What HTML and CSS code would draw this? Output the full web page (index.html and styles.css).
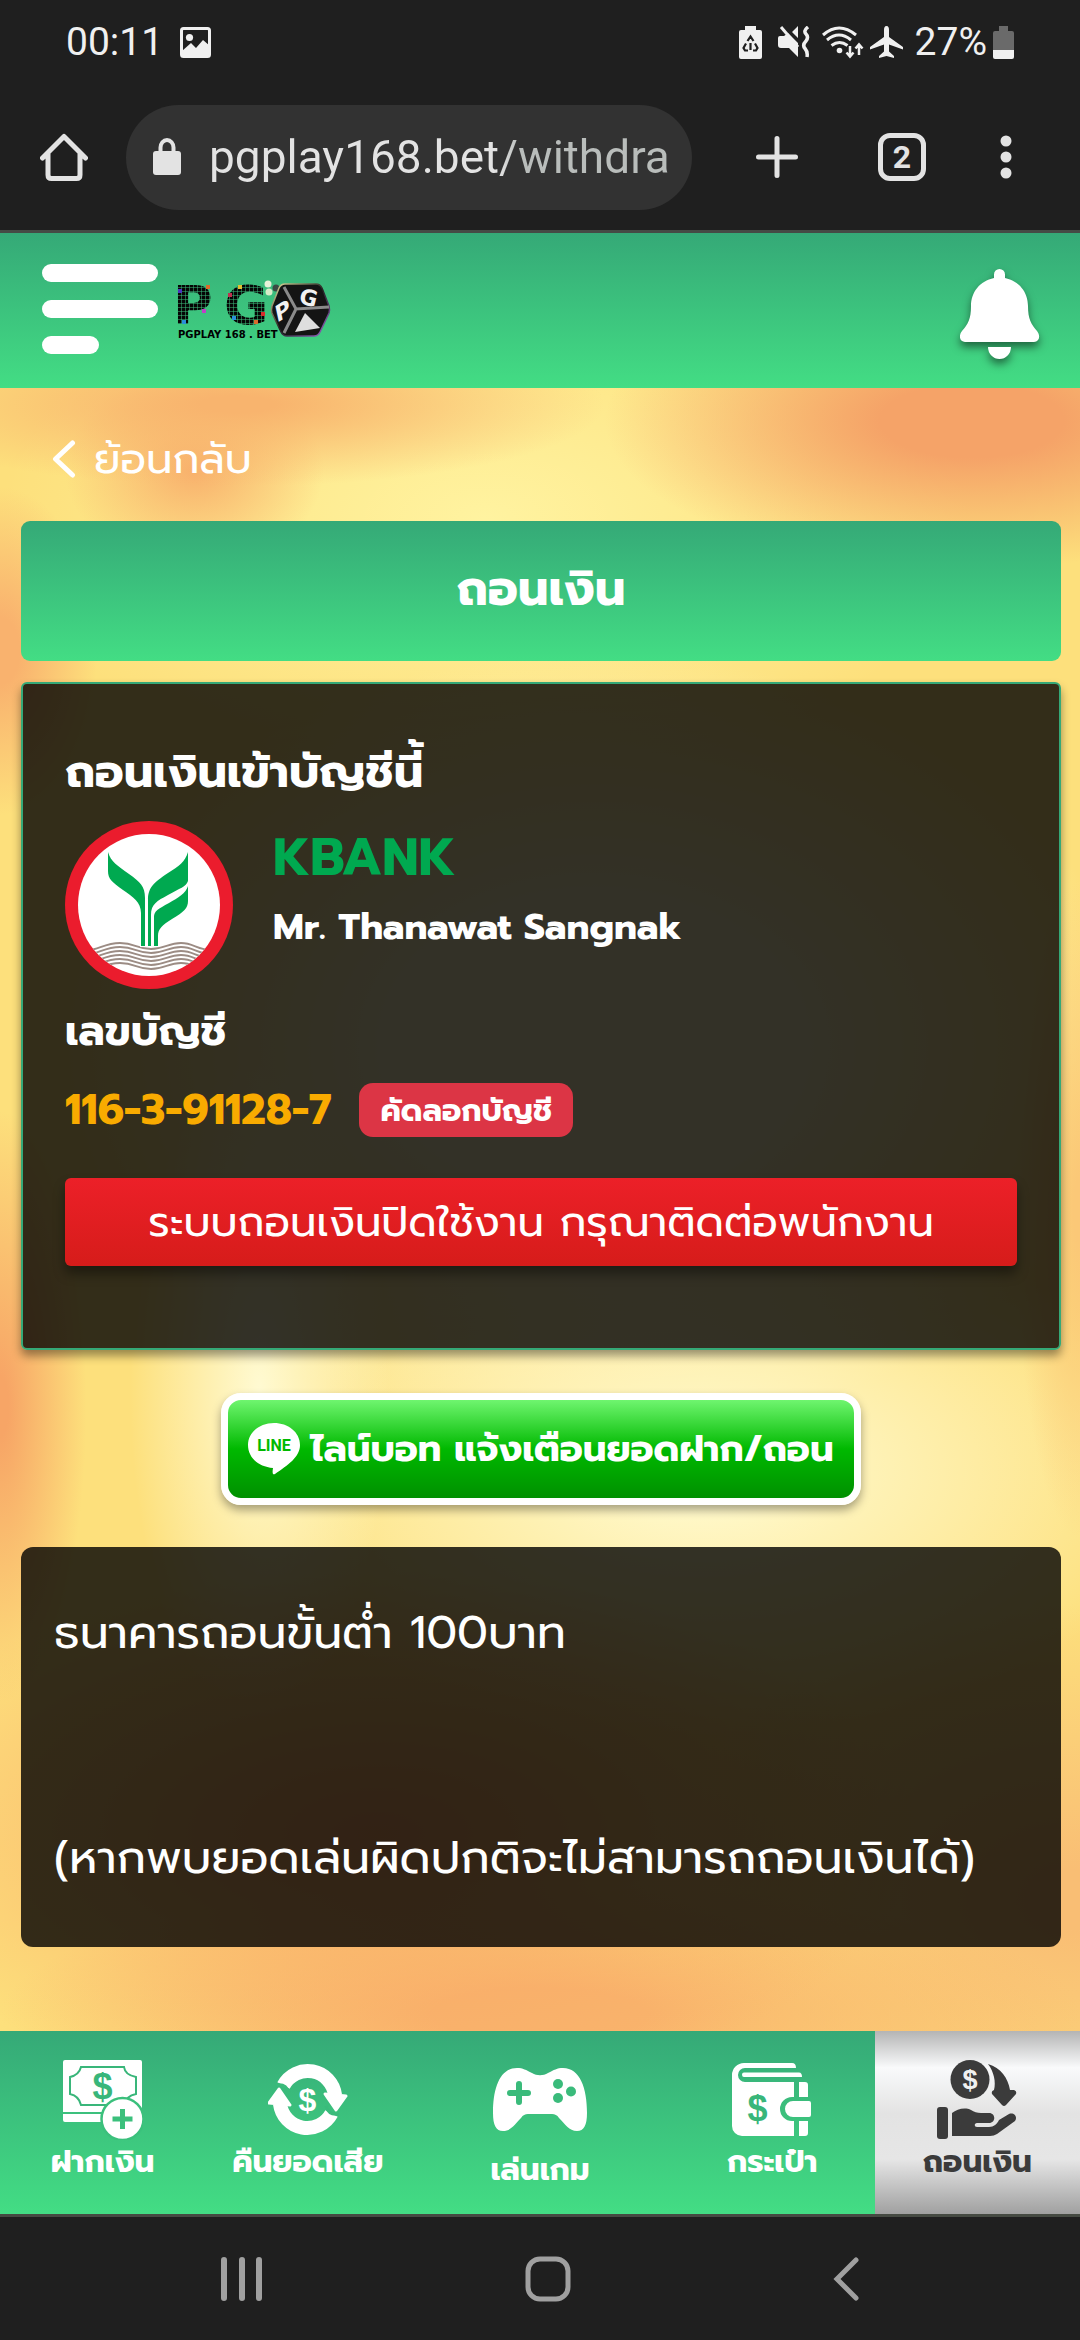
FILE: index.html
```html
<!DOCTYPE html>
<html lang="th">
<head>
    <meta charset="UTF-8">
    <meta name="viewport" content="width=device-width, initial-scale=1.0">
    <title>ถอนเงิน</title>
    <link rel="stylesheet" href="styles.css">
</head>
<body>
    <!-- Status bar -->
    <div class="status-bar">
        <div class="status-left">
            <span>00:11</span>
            <svg width="31" height="31" viewBox="0 0 31 31">
                <rect x="1.5" y="1.5" width="28" height="28" rx="2" fill="none" stroke="#f0f0f0" stroke-width="3"/>
                <circle cx="9.5" cy="10.5" r="3.6" fill="#f0f0f0"/>
                <path d="M2 24L11 16l5 5 7-8 7 6v10H2z" fill="#f0f0f0"/>
            </svg>
        </div>
        <div class="status-right">
            <svg width="23" height="33" viewBox="0 0 23 33">
                <path d="M6 0h11v4h4q2 0 2 2v25q0 2-2 2H2q-2 0-2-2V6q0-2 2-2h4z" fill="#f0f0f0"/>
                <path d="M8.500 15l3-4.500 3 4.500M16 17.500l2.500 4.500-1.500 2.500h-3M9 24.500H6L4.500 22 7 17.500M11.500 17v7" fill="none" stroke="#1f1f1f" stroke-width="2.200"/>
            </svg>
            <svg class="gap-sound" width="32" height="32" viewBox="0 0 32 32">
                <path d="M0 12q0-2 2-2h4l4-3 10 10v14l-9-9H3q-3 0-3-3zM20 0v12l-6-6z" fill="#f0f0f0"/>
                <path d="M3 1l17 20" stroke="#f0f0f0" stroke-width="3"/>
                <path d="M30 1q-5 4-2 7t0 7q-4 4-1 7.500t2 8.500" fill="none" stroke="#f0f0f0" stroke-width="3.500"/>
            </svg>
            <svg class="gap-wifi" width="42" height="33" viewBox="0 0 42 33">
                <g fill="none" stroke="#f0f0f0" stroke-width="3">
                    <path d="M1 9Q17-5 34 9M5 14q12-10 24 0M9.500 19.500q8-6 16 0"/>
                    <path d="M28 20v10M24.500 26.500l3.500 4 3.500-4M37 29V19M33.500 22.500l3.500-4 3.500 4" stroke-width="2.500"/>
                </g>
                <circle cx="17.500" cy="24.500" r="2.800" fill="#f0f0f0"/>
            </svg>
            <svg width="33" height="33" viewBox="0 0 33 33">
                <path d="M16.500 0c2 0 2.500 2 2.500 4v7l14 10v2.500L19 18.500v7l5 4.500v2l-7.500-2L9 32v-2l5-4.500v-7L0 23.500V21l14-10V4c0-2 .5-4 2.500-4z" fill="#f0f0f0"/>
            </svg>
            <span class="percent">27%</span>
            <svg width="21" height="33" viewBox="0 0 21 33">
                <path d="M6 0h9v5h4q2 0 2 2v17H0V7q0-2 2-2h4z" fill="#6a6a6a"/>
                <path d="M0 24h21v7q0 2-2 2H2q-2 0-2-2z" fill="#f0f0f0"/>
            </svg>
        </div>
    </div>

    <!-- Browser toolbar -->
    <div class="toolbar">
        <button class="tool-btn" aria-label="Home">
            <svg width="48" height="48" viewBox="0 0 48 48">
                <path d="M2.500 25L24 3.500 45.500 25M8 20v22q0 3.500 3.500 3.500h25q3.500 0 3.500-3.500V20" fill="none" stroke="#e3e3e3" stroke-width="5" stroke-linecap="round" stroke-linejoin="round"/>
            </svg>
        </button>
        <div class="address">
            <svg width="28" height="38" viewBox="0 0 28 38">
                <path d="M7.500 14V9.500a6.500 7.500 0 0 1 13 0V14" fill="none" stroke="#e3e3e3" stroke-width="4"/>
                <rect y="13" width="28" height="24" rx="3" fill="#e3e3e3"/>
            </svg>
            <input class="url" type="text" aria-label="URL" value="pgplay168.bet/withdra">
        </div>
        <div class="tool-group">
            <button class="tool-btn" aria-label="New tab">
                <svg width="42" height="42" viewBox="0 0 42 42">
                    <path d="M21 2.500v37M2.500 21h37" stroke="#e3e3e3" stroke-width="5" stroke-linecap="round"/>
                </svg>
            </button>
            <button class="tab-count">2</button>
            <button class="tool-btn" aria-label="Menu">
                <svg width="12" height="44" viewBox="0 0 12 44">
                    <circle cx="6" cy="6" r="5.500" fill="#e3e3e3"/>
                    <circle cx="6" cy="22" r="5.500" fill="#e3e3e3"/>
                    <circle cx="6" cy="38" r="5.500" fill="#e3e3e3"/>
                </svg>
            </button>
        </div>
    </div>

    <!-- Site header -->
    <header class="site-header">
        <button class="menu-btn" aria-label="เมนู">
            <span class="bar"></span>
            <span class="bar"></span>
            <span class="bar short"></span>
        </button>
        <a href="#" class="logo" aria-label="PGPLAY168.BET">
            <svg width="162" height="70" viewBox="-6 -6 162 70">
                <defs>
                    <pattern id="pixels" width="4" height="4" patternUnits="userSpaceOnUse">
                        <rect width="3.500" height="3.500" fill="#050505"/>
                    </pattern>
                    <linearGradient id="edge" x1="0" y1="0" x2="1" y2="1">
                        <stop offset="0" stop-color="#e8e2a0"/>
                        <stop offset=".5" stop-color="#222"/>
                        <stop offset="1" stop-color="#a060d0"/>
                    </linearGradient>
                </defs>
                <text class="logo-letters" x="-5 46" y="44" fill="url(#pixels)">PG</text>
                <rect x="28" y="5" width="4" height="4" fill="#d96a2c"/>
                <rect x="0" y="9" width="4" height="4" fill="#4a35c0"/>
                <rect x="24" y="29" width="4" height="4" fill="#c040c8"/>
                <rect x="4" y="40" width="4" height="4" fill="#2a8fd8"/>
                <rect x="60" y="5" width="4" height="4" fill="#e0c030"/>
                <rect x="50" y="13" width="4" height="4" fill="#c03050"/>
                <rect x="54" y="36" width="4" height="4" fill="#2a8fd8"/>
                <rect x="83" y="32" width="4" height="4" fill="#d82c2c"/>
                <rect x="76" y="40" width="4" height="4" fill="#d96a2c"/>
                <text class="logo-name" x="0" y="58">PGPLAY 168 . BET</text>
                <circle cx="90" cy="4" r="3.500" fill="#e6f2d8"/>
                <circle cx="98" cy="8" r="3.500" fill="#3b4a44"/>
                <circle cx="91" cy="12" r="3.500" fill="#d8ecc8"/>
                <path d="M107 4h31q4 0 6 4l7 18q1 4 0 7l-9 19q-2 4-6 4h-27q-4 0-6-4l-9-19q-1-3 0-7l7-18q2-4 6-4z" fill="#141414" stroke="url(#edge)" stroke-width="1.500"/>
                <path d="M106 7l12 22 33-2M118 29l-12 24" fill="none" stroke="#8a8a8a" stroke-width="3"/>
                <path d="M127 33l15 15-25 4z" fill="#dedede"/>
                <text class="dice-letter" transform="translate(120 23) rotate(14)">G</text>
                <text class="dice-letter" transform="translate(99 43) rotate(-12) skewY(-20)">P</text>
            </svg>
        </a>
        <button class="bell-btn" aria-label="แจ้งเตือน">
            <svg width="80" height="91" viewBox="0 0 80 91">
                <path d="M34 9V5.500a5.500 5.500 0 0 1 11 0V9C59 12 68 23 68 37c0 13 3 18 9 25 4 5 2 11-3 11H5c-5 0-7-6-3-11 6-7 9-12 9-25C11 23 20 12 34 9zM28 78h23a11.500 12 0 0 1-23 0z" fill="#fff"/>
            </svg>
        </button>
    </header>

    <main class="content">
        <a href="#" class="back">
            <svg width="24" height="38" viewBox="0 0 24 38">
                <path d="M20.500 3L3.500 19l17 16" fill="none" stroke="#fff" stroke-width="5" stroke-linecap="round" stroke-linejoin="round"/>
            </svg>
            <span>ย้อนกลับ</span>
        </a>

        <h1 class="title">ถอนเงิน</h1>

        <!-- Bank account -->
        <section class="account">
            <h2>ถอนเงินเข้าบัญชีนี้</h2>
            <div class="bank">
                <svg width="168" height="168" viewBox="0 0 168 168">
                    <defs>
                        <clipPath id="inner"><circle cx="84" cy="84" r="71"/></clipPath>
                    </defs>
                    <circle cx="84" cy="84" r="84" fill="#eb1c2d"/>
                    <circle cx="84" cy="84" r="71" fill="#fff"/>
                    <g clip-path="url(#inner)" fill="none" stroke="#9c8c84" stroke-width="1.800">
                        <path id="wave" d="M8 121C16 121 15 129 24 129S40 122 55 122S72 128 86 128S103 122 116 122S132 129 147 129"/>
                        <use href="#wave" y="4"/>
                        <use href="#wave" y="8"/>
                        <use href="#wave" y="12"/>
                        <use href="#wave" y="16"/>
                        <use href="#wave" y="20"/>
                    </g>
                    <path d="M75 118h19v8H75z" fill="#fff"/>
                    <g fill="#00a950">
                        <path d="M43 31C46 41 52 44 64 53 75 61 80 65 80 77v48h-4V92c0-11-8-16-18-23C47 61 43 58 43 50z"/>
                        <path d="M123 31C120 41 114 45 103 52 88 62 83 67 83 79v46h3V94c0-11 6-14 17-20 12-7 18-8 20-14z"/>
                        <path d="M123 65c-2 7-10 12-19 17-11 6-15 8-15 14v29h4v-10c0-7 4-11 14-17 12-7 16-11 16-18z"/>
                    </g>
                </svg>
                <div class="bank-info">
                    <p class="bank-name">KBANK</p>
                    <p class="owner">Mr. Thanawat Sangnak</p>
                </div>
            </div>
            <h3>เลขบัญชี</h3>
            <div class="number-row">
                <span class="number">116-3-91128-7</span>
                <button class="copy-btn">คัดลอกบัญชี</button>
            </div>
            <button class="closed-btn">ระบบถอนเงินปิดใช้งาน กรุณาติดต่อพนักงาน</button>
        </section>

        <a href="#" class="line-btn">
            <svg width="52" height="52" viewBox="0 0 52 52">
                <path d="M26 0c14 0 26 9 26 22 0 12-12 20-25 29-2 1-3 0-2-6C11 44 0 35 0 22 0 9 12 0 26 0z" fill="#fff"/>
                <text class="line-word" x="26" y="28" text-anchor="middle">LINE</text>
            </svg>
            <span>ไลน์บอท แจ้งเตือนยอดฝาก/ถอน</span>
        </a>

        <section class="notes">
            <p>ธนาคารถอนขั้นต่ำ 100บาท</p>
            <p>(หากพบยอดเล่นผิดปกติจะไม่สามารถถอนเงินได้)</p>
        </section>
    </main>

    <!-- Bottom menu -->
    <nav class="bottom-menu">
        <a href="#">
            <svg width="80" height="80" viewBox="0 0 80 80">
                <path d="M2 0h75q2 0 2 2v50H0V2q0-2 2-2zM0 54h60v8H2q-2 0-2-2z" fill="#fff"/>
                <path d="M18 7h43q1 8 12 10v17q-10 2-12 11H18Q16 36 7 34V17q9-2 11-10z" fill="none" stroke="#39b67a" stroke-width="2"/>
                <text class="dollar green big" x="39.500" y="39" text-anchor="middle">$</text>
                <circle cx="59.500" cy="59" r="21" fill="#fff" stroke="#3bc07c" stroke-width="2.500"/>
                <path d="M59.500 49v20M49.500 59h20" stroke="#3bc07c" stroke-width="5"/>
            </svg>
            <span>ฝากเงิน</span>
        </a>
        <a href="#">
            <svg width="80" height="80" viewBox="0 -5 80 80">
                <g id="turn">
                    <path d="M15.500 20.500A27.500 27.500 0 0 1 67 30" fill="none" stroke="#fff" stroke-width="14"/>
                    <path d="M57 29l21 2-10 14z" fill="#fff" stroke="#fff" stroke-width="3" stroke-linejoin="round"/>
                    <path d="M8 20q10-2 13 8" fill="none" stroke="#3abb7b" stroke-width="3"/>
                </g>
                <use href="#turn" transform="rotate(180 39.500 34.500)"/>
                <text class="dollar white" x="39.500" y="46" text-anchor="middle">$</text>
            </svg>
            <span>คืนยอดเสีย</span>
        </a>
        <a href="#" class="play">
            <svg width="94" height="80" viewBox="0 -8 94 80">
                <path d="M24 0c6 0 9 2 15 5 5 3 11 3 16 0C61 2 64 0 70 0c17 0 24 20 24 45 0 12-3 18-10 18-8 0-12-7-18-13-2-3-4-4-7-4H35c-3 0-5 1-7 4-6 6-10 13-18 13C3 63 0 57 0 45 0 20 7 0 24 0z" fill="#fff"/>
                <path d="M26 16v18M17 25h18" stroke="#3abb7b" stroke-width="6" stroke-linecap="round"/>
                <g fill="#3abb7b">
                    <circle cx="65" cy="16" r="5"/>
                    <circle cx="65" cy="30" r="5"/>
                    <circle cx="78" cy="23.500" r="5"/>
                </g>
            </svg>
            <span>เล่นเกม</span>
        </a>
        <a href="#">
            <svg width="80" height="80" viewBox="0 -3 80 80">
                <g fill="#fff">
                    <path d="M12 0h48q4 0 4 5H13a7 7 0 0 0 0 14h49v15h-2a12 12 0 0 0 0 24h2v15H10A10 10 0 0 1 0 63V12A12 12 0 0 1 12 0z"/>
                    <path d="M12 9.500h55q3 0 3 4.500H12q-2 0-2-2.200t2-2.300zM67 19h6q3 0 3 3v12h-9zM67 58h9v12q0 3-3 3h-6zM61 38h16q2 0 2 2v12q0 2-2 2H61a8 8 0 0 1 0-16z"/>
                </g>
                <text class="dollar green big" x="25.500" y="58" text-anchor="middle">$</text>
            </svg>
            <span>กระเป๋า</span>
        </a>
        <a href="#" class="active">
            <svg width="80" height="80" viewBox="0 0 80 80">
                <g fill="#3b3b3b">
                    <circle cx="33" cy="19.500" r="19.500"/>
                    <path d="M51 4c13 4 20 14 22 26h4q3 1 2 4L69 45q-2 2-4 0L55 34q-1-3 2-4c2-8 0-18-6-26z"/>
                    <rect y="47" width="11" height="32" rx="3"/>
                    <path d="M15 53c5-4 13-6 19-3 3 2 6 3 10 3h8c7 0 7 10 0 10H40c-3 0-3 4 0 4h12c5 0 8-3 10-7l10-6c5-2 9 3 6 7L60 74q-3 2-7 2H15z"/>
                </g>
                <text class="dollar light" x="33" y="29" text-anchor="middle">$</text>
            </svg>
            <span>ถอนเงิน</span>
        </a>
    </nav>

    <!-- System navigation -->
    <div class="system-nav">
        <button aria-label="Recent apps">
            <svg width="42" height="44" viewBox="0 0 42 44">
                <path d="M3 3v38M21 3v38M38 3v38" stroke="#a0a0a0" stroke-width="6" stroke-linecap="round"/>
            </svg>
        </button>
        <button aria-label="Home screen">
            <svg width="46" height="46" viewBox="0 0 46 46">
                <rect x="3" y="3" width="40" height="40" rx="12" fill="none" stroke="#a0a0a0" stroke-width="5"/>
            </svg>
        </button>
        <button aria-label="Back">
            <svg width="26" height="44" viewBox="0 0 26 44">
                <path d="M23 3L4 22l19 19" fill="none" stroke="#a0a0a0" stroke-width="5" stroke-linecap="round"/>
            </svg>
        </button>
    </div>
</body>
</html>
```
FILE: styles.css
```css
* {
    box-sizing: border-box;
}

body {
    margin: 0;
    min-height: 100vh;
    display: flex;
    flex-direction: column;
    font-family: "Prompt", Inter, "Noto Sans Thai", "Noto Sans", sans-serif;
    background-color: #1f1f1f;
    color: #fff;
}

h1, h2, h3, p {
    margin: 0;
}

button {
    padding: 0;
    border: none;
    background: none;
    color: inherit;
    font-family: inherit;
    cursor: pointer;
}

a {
    color: inherit;
    text-decoration: none;
}

svg {
    display: block;
    flex-shrink: 0;
}

/* Status bar */
.status-bar {
    display: flex;
    justify-content: space-between;
    align-items: center;
    height: 84px;
    padding: 0 66px;
    font-family: Roboto, sans-serif;
    font-size: 39px;
    color: #f0f0f0;
}

.status-left {
    display: flex;
    align-items: center;
    gap: 17px;
}

.status-right {
    display: flex;
    align-items: center;
    gap: 6px;
}

.status-right .gap-sound {
    margin: 0 6px 0 10px;
}

.percent {
    margin-left: 6px;
}

/* Browser toolbar */
.toolbar {
    display: flex;
    align-items: center;
    height: 149px;
    padding: 0 68px 0 40px;
    border-bottom: 3px solid #454a45;
    font-family: Roboto, sans-serif;
}

.address {
    flex: 1;
    min-width: 0;
    display: flex;
    align-items: center;
    gap: 28px;
    height: 105px;
    margin: 0 64px 0 38px;
    padding: 0 20px 0 27px;
    border-radius: 53px;
    background-color: #323232;
}

.url {
    flex: 1;
    min-width: 0;
    padding: 0;
    border: none;
    outline: none;
    font-family: inherit;
    font-size: 46px;
    color: transparent;
    background: linear-gradient(to right, #e3e3e3 290px, #b9bdbb 310px);
    background-clip: text;
    -webkit-background-clip: text;
}

.tool-group {
    display: flex;
    flex-shrink: 0;
    align-items: center;
    justify-content: space-between;
    width: 256px;
}

.tab-count {
    width: 48px;
    height: 48px;
    margin-left: 6px;
    border: 5px solid #e3e3e3;
    border-radius: 12px;
    font-family: Roboto, sans-serif;
    font-size: 32px;
    font-weight: bold;
    line-height: 36px;
    color: #e3e3e3;
}

/* Site header */
.site-header {
    display: flex;
    align-items: center;
    height: 155px;
    padding: 0 40px 3px 42px;
    background: linear-gradient(#35a977, #43dd84);
}

.menu-btn {
    display: flex;
    flex-direction: column;
    gap: 18px;
}

.bar {
    width: 116px;
    height: 18px;
    border-radius: 9px;
    background-color: #fff;
}

.bar.short {
    width: 57px;
}

.logo {
    margin-left: 14px;
}

.logo-letters {
    font-family: "DejaVu Sans", sans-serif;
    font-weight: bold;
    font-size: 54px;
}

.logo-name {
    font-family: "DejaVu Sans", sans-serif;
    font-weight: bold;
    font-size: 10px;
}

.dice-letter {
    font-family: "DejaVu Sans", sans-serif;
    font-weight: bold;
    font-size: 22px;
    fill: #f2f2f2;
}

.bell-btn {
    margin-left: auto;
    padding-top: 10px;
    filter: drop-shadow(0 5px 4px rgba(0, 0, 0, 0.5));
}

/* Page content */
.content {
    flex: 1;
    display: flex;
    flex-direction: column;
    padding: 40px 19px 84px 21px;
    background:
        radial-gradient(ellipse 34% 9% at 90% 2%, #f5a368 25%, rgba(245, 163, 104, 0) 100%),
        radial-gradient(ellipse 34% 5% at 22% 1%, #f8b46e 10%, rgba(248, 180, 110, 0) 100%),
        radial-gradient(ellipse 12% 6% at 18% 5%, #f8b06c 0%, rgba(248, 176, 108, 0) 100%),
        radial-gradient(ellipse 9% 10% at 0% 16%, #f9b26e 20%, rgba(249, 178, 110, 0) 100%),
        radial-gradient(ellipse 8% 18% at 0% 62%, #f7a566 10%, rgba(247, 165, 102, 0) 100%),
        radial-gradient(ellipse 6% 20% at 100% 50%, #fbc877 10%, rgba(251, 200, 119, 0) 100%),
        radial-gradient(ellipse 50% 16% at 35% 88%, #f9a867 0%, rgba(249, 168, 103, 0) 100%),
        radial-gradient(ellipse 50% 8% at 50% 99%, #f9b46c 20%, rgba(249, 180, 108, 0) 100%),
        radial-gradient(ellipse 40% 18% at 100% 92%, #f9be74 10%, rgba(249, 190, 116, 0) 100%),
        radial-gradient(ellipse 12% 20% at 24% 61%, #fffad2 0%, rgba(255, 250, 210, 0) 100%),
        radial-gradient(ellipse 45% 16% at 65% 66%, #fff9cc 10%, rgba(255, 249, 204, 0) 100%),
        radial-gradient(ellipse 50% 24% at 55% 40%, #fff3c0 40%, rgba(255, 243, 192, 0) 100%),
        radial-gradient(ellipse 45% 16% at 45% 8%, #fff3a0 0%, rgba(255, 243, 160, 0) 100%),
        #fde07c;
}

.back {
    display: flex;
    align-items: center;
    align-self: flex-start;
    gap: 18px;
    height: 62px;
    margin: 0 0 31px 31px;
    font-size: 42px;
}

.title {
    height: 140px;
    border-radius: 9px;
    background: linear-gradient(#35a977, #43dd84);
    font-size: 48px;
    line-height: 136px;
    text-align: center;
}

.account {
    display: flex;
    flex-direction: column;
    margin-top: 21px;
    padding: 56px 42px 82px;
    border: 2px solid #35a977;
    border-radius: 6px;
    background-color: rgba(0, 0, 0, 0.8);
    box-shadow: 0 6px 10px rgba(0, 0, 0, 0.4);
}

.account h2 {
    font-size: 46px;
    line-height: 64px;
}

.bank {
    display: flex;
    gap: 40px;
    margin-top: 17px;
}

.bank-name {
    font-size: 52px;
    font-weight: bold;
    line-height: 74px;
    color: #00a950;
}

.owner {
    font-size: 37px;
    font-weight: bold;
    line-height: 64px;
}

.account h3 {
    margin-top: 10px;
    font-size: 42px;
    line-height: 64px;
}

.number-row {
    display: flex;
    align-items: center;
    gap: 28px;
    margin-top: 19px;
}

.number {
    font-size: 42px;
    font-weight: bold;
    line-height: 56px;
    color: #f9ab00;
}

.copy-btn {
    height: 54px;
    padding: 0 21px;
    border-radius: 14px;
    background-color: #dc3545;
    font-size: 31px;
    font-weight: bold;
}

.closed-btn {
    height: 88px;
    margin-top: 40px;
    border-radius: 6px;
    background: linear-gradient(#ec2028, #d61c1a);
    box-shadow: 0 8px 12px rgba(0, 0, 0, 0.4);
    font-size: 42px;
}

.line-btn {
    display: flex;
    align-items: center;
    align-self: center;
    gap: 10px;
    height: 112px;
    margin-top: 43px;
    padding: 0 20px;
    border: 7px solid #fff;
    border-radius: 20px;
    background: linear-gradient(#6ff56f, #00b900 50%, #009000);
    box-shadow: 0 5px 10px rgba(0, 0, 0, 0.35);
    font-size: 37px;
    font-weight: bold;
}

.line-word {
    font-family: Roboto, sans-serif;
    font-weight: bold;
    font-size: 16px;
    fill: #00b900;
}

.notes {
    display: flex;
    flex-direction: column;
    gap: 161px;
    margin-top: 42px;
    padding: 54px 33px 57px;
    border-radius: 12px;
    background-color: rgba(0, 0, 0, 0.8);
    font-size: 46px;
    line-height: 64px;
}

/* Bottom menu */
.bottom-menu {
    display: grid;
    grid-template-columns: 19fr 19fr 24fr 19fr 19fr;
    height: 186px;
    border-bottom: 3px solid #454a42;
    background: linear-gradient(#35a977, #43dd84);
    font-size: 31px;
    font-weight: bold;
    line-height: 40px;
}

.bottom-menu a {
    display: flex;
    flex-direction: column;
    align-items: center;
    gap: 2px;
    padding-top: 29px;
}

.bottom-menu .play {
    gap: 10px;
}

.bottom-menu .active {
    background: linear-gradient(#b4b4b4, #f9fafb 20%, #e3e3e3 45%, #e6e6e6 70%, #a0a0a0);
    color: #3b3b3b;
}

.dollar {
    font-family: "Liberation Sans", sans-serif;
    font-weight: bold;
    font-size: 32px;
}

.dollar.big {
    font-size: 36px;
}

.dollar.green {
    fill: #39b67a;
}

.dollar.white {
    fill: #fff;
}

.dollar.light {
    font-size: 27px;
    fill: #f0f0f0;
}

/* System navigation */
.system-nav {
    display: flex;
    justify-content: space-between;
    align-items: center;
    height: 123px;
    padding: 0 20.5% 0;
}
```
